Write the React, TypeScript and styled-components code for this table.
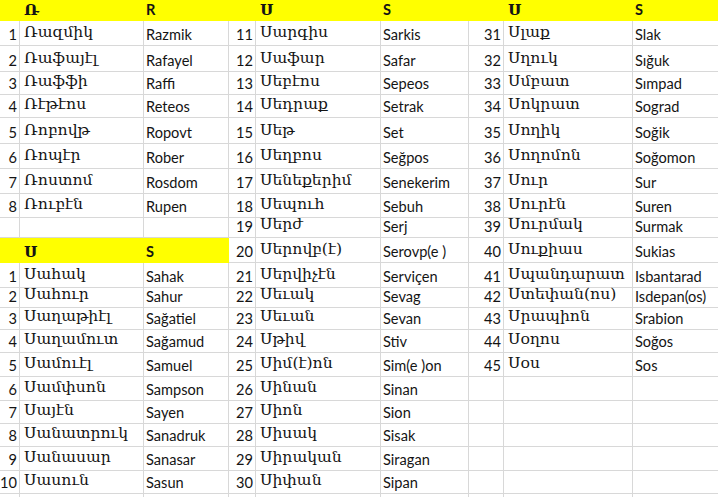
import React from "react";
import styled, { createGlobalStyle } from "styled-components";

const GlobalStyle = createGlobalStyle`
  html, body {
    margin: 0;
    padding: 0;
    background: #ffffff;
    overflow: hidden;
  }
`;

type Kind = "num" | "arm" | "lat";

interface CellData {
  text: string;
  kind: Kind;
  fill?: boolean;
  bold?: boolean;
}

const COL_WIDTHS = [20, 124, 85, 27, 125, 88, 35, 129, 86];
const ROW_HEIGHTS = [21, 25, 26, 23, 23, 26, 25, 25, 24, 20, 25, 25, 20, 22, 23, 24, 24, 23, 23, 24, 23, 22];

const Sheet = styled.div`
  display: grid;
  grid-template-columns: ${COL_WIDTHS.map((w) => `${w}px`).join(" ")};
  grid-template-rows: ${ROW_HEIGHTS.map((h) => `${h}px`).join(" ")};
  width: 718px;
  height: 497px;
  overflow: hidden;
  background: #ffffff;
  color: #141414;
`;

const Cell = styled.div<{ $kind: Kind; $fill?: boolean; $bold?: boolean }>`
  box-sizing: border-box;
  display: flex;
  align-items: flex-end;
  justify-content: ${(p) => (p.$kind === "num" ? "flex-end" : "flex-start")};
  min-width: 0;
  white-space: nowrap;
  overflow: visible;
  background: ${(p) => (p.$fill ? "#ffff00" : "#ffffff")};
  border-right: 1px solid ${(p) => (p.$fill ? "#ffff00" : "#d8d8d8")};
  border-bottom: 1px solid ${(p) => (p.$fill ? "#ffff00" : "#d8d8d8")};
  font-weight: ${(p) => (p.$bold ? 700 : 400)};
  font-family: ${(p) =>
    p.$kind === "arm"
      ? `"DejaVu Serif", serif`
      : `Lato, "Liberation Sans", sans-serif`};
  font-size: ${(p) => (p.$kind === "arm" ? "15.6px" : "14.6px")};
  line-height: ${(p) => (p.$bold && p.$kind === "arm" ? "19px" : "15px")};
  padding-left: ${(p) => (p.$kind === "arm" ? "4px" : p.$kind === "lat" ? "2px" : "0")};
  padding-right: ${(p) => (p.$kind === "num" ? "2px" : "0")};
  padding-bottom: ${(p) =>
    p.$bold && p.$kind === "arm" ? "1px" : p.$kind === "arm" ? "5px" : "3px"};
`;

const n = (t: string | number, fill = false): CellData => ({ text: String(t), kind: "num", fill });
const a = (t: string, fill = false, bold = false): CellData => ({ text: t, kind: "arm", fill, bold });
const l = (t: string, fill = false, bold = false): CellData => ({ text: t, kind: "lat", fill, bold });

const left: [string, string][] = [
  ["Ռազմիկ", "Razmik"],
  ["Ռաֆայէլ", "Rafayel"],
  ["Ռաֆֆի", "Raffi"],
  ["Ռէթէոս", "Reteos"],
  ["Ռոբովթ", "Ropovt"],
  ["Ռոպէր", "Rober"],
  ["Ռոստոմ", "Rosdom"],
  ["Ռուբէն", "Rupen"],
];

const left2: [string, string][] = [
  ["Սահակ", "Sahak"],
  ["Սահուր", "Sahur"],
  ["Սաղաթիէլ", "Sağatiel"],
  ["Սաղամուտ", "Sağamud"],
  ["Սամուէլ", "Samuel"],
  ["Սամփսոն", "Sampson"],
  ["Սայէն", "Sayen"],
  ["Սանատրուկ", "Sanadruk"],
  ["Սանասար", "Sanasar"],
  ["Սասուն", "Sasun"],
];

const middle: [string, string][] = [
  ["Սարգիս", "Sarkis"],
  ["Սաֆար", "Safar"],
  ["Սեբէոս", "Sepeos"],
  ["Սեդրաք", "Setrak"],
  ["Սեթ", "Set"],
  ["Սեղբոս", "Seğpos"],
  ["Սենեքերիմ", "Senekerim"],
  ["Սեպուհ", "Sebuh"],
  ["Սերժ", "Serj"],
  ["Սերովբ(է)", "Serovp(e )"],
  ["Սերվիչէն", "Serviçen"],
  ["Սեւակ", "Sevag"],
  ["Սեւան", "Sevan"],
  ["Սթիվ", "Stiv"],
  ["Սիմ(է)ոն", "Sim(e )on"],
  ["Սինան", "Sinan"],
  ["Սիոն", "Sion"],
  ["Սիսակ", "Sisak"],
  ["Սիրական", "Siragan"],
  ["Սիփան", "Sipan"],
];

const right: [string, string][] = [
  ["Սլաք", "Slak"],
  ["Սղուկ", "Sığuk"],
  ["Սմբատ", "Sımpad"],
  ["Սոկրատ", "Sograd"],
  ["Սողիկ", "Soğik"],
  ["Սողոմոն", "Soğomon"],
  ["Սուր", "Sur"],
  ["Սուրէն", "Suren"],
  ["Սուրմակ", "Surmak"],
  ["Սուքիաս", "Sukias"],
  ["Սպանդարատ", "Isbantarad"],
  ["Ստեփան(ոս)", "Isdepan(os)"],
  ["Սրապիոն", "Srabion"],
  ["Սօղոս", "Soğos"],
  ["Սօս", "Sos"],
];

function block(list: [string, string][], idx: number, start: number): CellData[] {
  const item = list[idx];
  if (!item) return [n(""), a(""), l("")];
  return [n(start + idx), a(item[0]), l(item[1])];
}

function buildRows(): CellData[][] {
  const rows: CellData[][] = [];
  rows.push([
    n("", true), a("Ռ", true, true), l("R", true, true),
    n("", true), a("Ս", true, true), l("S", true, true),
    n("", true), a("Ս", true, true), l("S", true, true),
  ]);
  for (let r = 0; r < 21; r++) {
    let leftCells: CellData[];
    if (r < 8) leftCells = block(left, r, 1);
    else if (r === 9) leftCells = [n("", true), a("Ս", true, true), l("S", true, true)];
    else if (r >= 10) leftCells = block(left2, r - 10, 1);
    else leftCells = [n(""), a(""), l("")];
    const midCells = block(middle, r, 11);
    const rightCells = block(right, r, 31);
    rows.push([...leftCells, ...midCells, ...rightCells]);
  }
  return rows;
}

const ROWS = buildRows();

export default function App() {
  return (
    <>
      <GlobalStyle />
      <Sheet>
        {ROWS.map((row, ri) =>
          row.map((c, ci) => (
            <Cell key={`${ri}-${ci}`} $kind={c.kind} $fill={c.fill} $bold={c.bold}>
              {c.text}
            </Cell>
          ))
        )}
      </Sheet>
    </>
  );
}
